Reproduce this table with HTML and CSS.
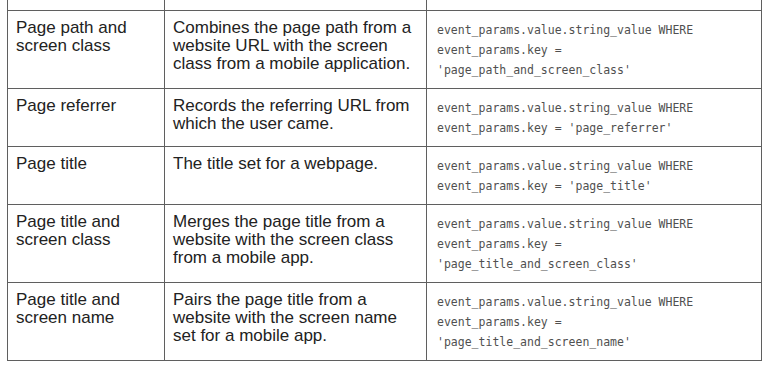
FILE: index.html
```
<!DOCTYPE html>
<html lang="en">

<head>
    <meta charset="utf-8">
    <meta name="viewport" content="width=device-width, initial-scale=1.0">
    <title>Page dimensions</title>
    <link rel="stylesheet" href="styles.css">
</head>

<body>
    <div class="side">
        <table class="felter">
            <colgroup>
                <col class="kol-navn">
                <col class="kol-beskrivelse">
                <col class="kol-kode">
            </colgroup>
            <tr class="afskaaret">
                <td></td>
                <td></td>
                <td></td>
            </tr>
            <tr>
                <td>Page path and<br>screen class</td>
                <td>Combines the page path from a<br>website URL with the screen<br>class from a mobile application.</td>
                <td class="kode">event_params.value.string_value WHERE<br>event_params.key =<br>'page_path_and_screen_class'</td>
            </tr>
            <tr>
                <td>Page referrer</td>
                <td>Records the referring URL from<br>which the user came.</td>
                <td class="kode">event_params.value.string_value WHERE<br>event_params.key = 'page_referrer'</td>
            </tr>
            <tr>
                <td>Page title</td>
                <td>The title set for a webpage.</td>
                <td class="kode">event_params.value.string_value WHERE<br>event_params.key = 'page_title'</td>
            </tr>
            <tr>
                <td>Page title and<br>screen class</td>
                <td>Merges the page title from a<br>website with the screen class<br>from a mobile app.</td>
                <td class="kode">event_params.value.string_value WHERE<br>event_params.key =<br>'page_title_and_screen_class'</td>
            </tr>
            <tr>
                <td>Page title and<br>screen name</td>
                <td>Pairs the page title from a<br>website with the screen name<br>set for a mobile app.</td>
                <td class="kode">event_params.value.string_value WHERE<br>event_params.key =<br>'page_title_and_screen_name'</td>
            </tr>
        </table>
    </div>
</body>

</html>
```

FILE: styles.css
```
* {
    margin: 0;
    padding: 0;
    box-sizing: border-box;
}

body {
    background-color: #ffffff;
    font-family: "Liberation Sans", Arial, sans-serif;
    color: #222222;
}

.side {
    padding-left: 7px;
}

.felter {
    border-collapse: collapse;
    table-layout: fixed;
    width: 754px;
}

.kol-navn {
    width: 157px;
}

.kol-beskrivelse {
    width: 262px;
}

.kol-kode {
    width: 335px;
}

.felter td {
    border: 1px solid #5f5f5f;
    vertical-align: top;
    padding: 8px 6px 6px 8px;
    font-size: 17px;
    line-height: 18px;
    white-space: nowrap;
}

.afskaaret td {
    border-top: none;
    height: 10px;
    padding: 0;
}

.felter td.kode {
    font-family: "DejaVu Sans Mono", "Liberation Mono", monospace;
    font-size: 11.5px;
    line-height: 20px;
    color: #505050;
    padding: 9px 10px 8px 10px;
}
```
